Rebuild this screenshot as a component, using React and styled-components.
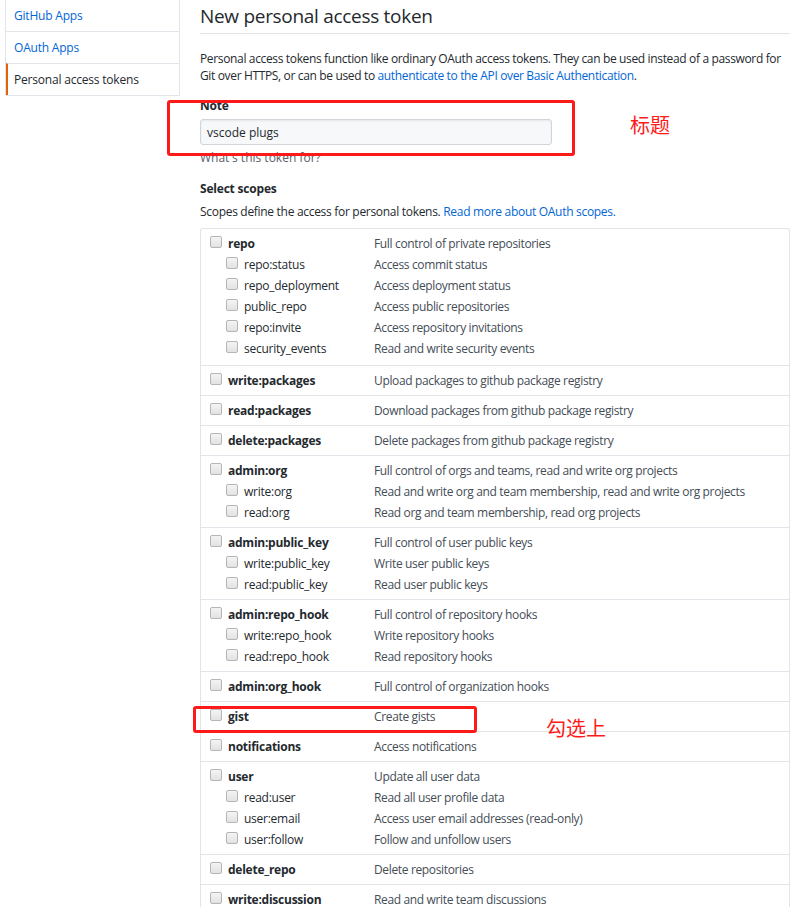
import React from "react";
import styled, { createGlobalStyle } from "styled-components";

const Global = createGlobalStyle`
  body {
    margin: 0;
    background: #fff;
    font-family: "Open Sans", "Noto Sans", sans-serif;
    color: #24292e;
    font-size: 12px;
  }
`;

const Page = styled.div`
  display: flex;
  gap: 20px;
  padding-left: 5px;
  width: 790px;
  box-sizing: border-box;
`;

const Sidebar = styled.nav`
  width: 175px;
  box-sizing: border-box;
  flex-shrink: 0;
  border: 1px solid #e1e4e8;
  border-top: none;
  align-self: flex-start;
`;

const NavItem = styled.div`
  height: 31px;
  display: flex;
  align-items: center;
  padding-left: ${(p) => (p.$active ? "6px" : "8px")};
  border-top: ${(p) => (p.$first ? "none" : "1px solid #e1e4e8")};
  border-left: ${(p) => (p.$active ? "2px solid #e36209" : "none")};
  color: ${(p) => (p.$active ? "#24292e" : "#0366d6")};
  font-size: 12px;
  letter-spacing: -0.2px;
`;

const Main = styled.main`
  flex: 1;
  min-width: 0;
`;

const Heading = styled.h2`
  margin: 0;
  font-size: 19px;
  font-weight: 400;
  line-height: 33px;
  border-bottom: 1px solid #e1e4e8;
  letter-spacing: -0.3px;
`;

const Lead = styled.p`
  margin: 16px 0 0;
  line-height: 17px;
  font-size: 12px;
  letter-spacing: -0.35px;
`;

const Link = styled.a`
  color: #0366d6;
  text-decoration: none;
`;

const Field = styled.div`
  position: relative;
  margin-top: 14px;
  width: 352px;
`;

const Label = styled.div`
  font-weight: 700;
  font-size: 12px;
  line-height: 16px;
  letter-spacing: -0.2px;
`;

const Input = styled.div`
  margin-top: 5px;
  height: 24px;
  border: 1px solid #d1d5da;
  border-radius: 3px;
  background: #f6f8fa;
  display: flex;
  align-items: center;
  padding-left: 6px;
  font-size: 12px;
  box-shadow: inset 0 1px 2px rgba(27, 31, 35, 0.075);
`;

const Hint = styled.div`
  margin-top: 5px;
  color: #586069;
  font-size: 12px;
  line-height: 16px;
`;

const RedBox = styled.div`
  position: absolute;
  border: 3px solid #ff1a1a;
  border-radius: 3px;
  left: ${(p) => p.$left}px;
  top: ${(p) => p.$top}px;
  width: ${(p) => p.$w}px;
  height: ${(p) => p.$h}px;
  box-sizing: border-box;
  pointer-events: none;
`;

const Note = styled.div`
  position: absolute;
  left: ${(p) => p.$left}px;
  top: ${(p) => p.$top}px;
  color: #ff1a1a;
  font-size: 20px;
  font-family: "Noto Sans CJK SC", sans-serif;
  white-space: nowrap;
  line-height: 24px;
`;

const SectionTitle = styled(Label)`
  margin-top: 15px;
`;

const SectionText = styled.p`
  margin: 7px 0 0;
  line-height: 16px;
  font-size: 12px;
  letter-spacing: -0.3px;
`;

const Table = styled.div`
  margin-top: 8px;
  border: 1px solid #e1e4e8;
  border-bottom: none;
  border-radius: 3px 3px 0 0;
`;

const Group = styled.div`
  position: relative;
  padding: 4px 0 ${(p) => (p.$big ? "6px" : "4px")};
  border-bottom: 1px solid #e1e4e8;
`;

const Row = styled.div`
  display: flex;
  align-items: center;
  height: 21px;
  padding-left: ${(p) => (p.$sub ? "25px" : "9px")};
`;

const Box = styled.span`
  width: 10px;
  height: 10px;
  border: 1px solid #b5b5b5;
  border-radius: 2px;
  background: linear-gradient(#f4f4f4, #e2e2e2);
  flex-shrink: 0;
  margin-right: 6px;
  margin-top: -3px;
`;

const Name = styled.span`
  width: ${(p) => (p.$sub ? "130px" : "146px")};
  font-weight: ${(p) => (p.$sub ? 400 : 700)};
  font-size: 12px;
  letter-spacing: -0.25px;
`;

const Desc = styled.span`
  color: #444d56;
  font-size: 12px;
  letter-spacing: -0.35px;
`;

const scopes = [
  ["repo", "Full control of private repositories", [
    ["repo:status", "Access commit status"],
    ["repo_deployment", "Access deployment status"],
    ["public_repo", "Access public repositories"],
    ["repo:invite", "Access repository invitations"],
    ["security_events", "Read and write security events"],
  ]],
  ["write:packages", "Upload packages to github package registry", []],
  ["read:packages", "Download packages from github package registry", []],
  ["delete:packages", "Delete packages from github package registry", []],
  ["admin:org", "Full control of orgs and teams, read and write org projects", [
    ["write:org", "Read and write org and team membership, read and write org projects"],
    ["read:org", "Read org and team membership, read org projects"],
  ]],
  ["admin:public_key", "Full control of user public keys", [
    ["write:public_key", "Write user public keys"],
    ["read:public_key", "Read user public keys"],
  ]],
  ["admin:repo_hook", "Full control of repository hooks", [
    ["write:repo_hook", "Write repository hooks"],
    ["read:repo_hook", "Read repository hooks"],
  ]],
  ["admin:org_hook", "Full control of organization hooks", []],
  ["gist", "Create gists", []],
  ["notifications", "Access notifications", []],
  ["user", "Update all user data", [
    ["read:user", "Read all user profile data"],
    ["user:email", "Access user email addresses (read-only)"],
    ["user:follow", "Follow and unfollow users"],
  ]],
  ["delete_repo", "Delete repositories", []],
  ["write:discussion", "Read and write team discussions", []],
];

export default function App() {
  return (
    <>
      <Global />
      <Page>
        <Sidebar>
          <NavItem $first>GitHub Apps</NavItem>
          <NavItem>OAuth Apps</NavItem>
          <NavItem $active>Personal access tokens</NavItem>
        </Sidebar>
        <Main>
          <Heading>New personal access token</Heading>
          <Lead>
            Personal access tokens function like ordinary OAuth access tokens. They can be used instead of a password for Git over HTTPS, or can be used to{" "}
            <Link>authenticate to the API over Basic Authentication</Link>.
          </Lead>
          <Field>
            <Label>Note</Label>
            <Input>vscode plugs</Input>
            <Hint>What's this token for?</Hint>
            <RedBox $left={-33} $top={2} $w={408} $h={56} />
            <Note $left={430} $top={15}>标题</Note>
          </Field>
          <SectionTitle>Select scopes</SectionTitle>
          <SectionText>
            Scopes define the access for personal tokens. <Link>Read more about OAuth scopes.</Link>
          </SectionText>
          <Table>
            {scopes.map(([name, desc, subs]) => (
              <Group key={name} $big={subs.length > 3}>
                <Row>
                  <Box />
                  <Name>{name}</Name>
                  <Desc>{desc}</Desc>
                </Row>
                {subs.map(([s, d]) => (
                  <Row key={s} $sub>
                    <Box />
                    <Name $sub>{s}</Name>
                    <Desc>{d}</Desc>
                  </Row>
                ))}
                {name === "gist" && (
                  <>
                    <RedBox $left={-8} $top={4} $w={284} $h={27} />
                    <Note $left={345} $top={14}>勾选上</Note>
                  </>
                )}
              </Group>
            ))}
          </Table>
        </Main>
      </Page>
    </>
  );
}
